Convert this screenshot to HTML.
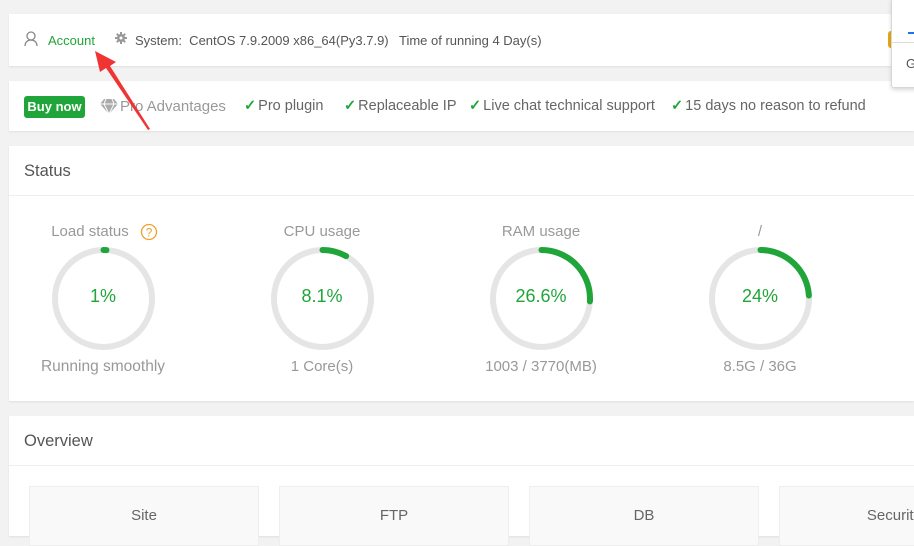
<!DOCTYPE html>
<html><head><meta charset="utf-8"><style>
*{margin:0;padding:0;box-sizing:border-box}
body{width:914px;height:522px;overflow:hidden;background:#f2f2f2;font-family:"Liberation Sans",sans-serif;position:relative;color:#666}
.card{position:absolute;left:9px;right:0;background:#fff;box-shadow:0 1px 2px rgba(0,0,0,.08)}
.t{position:absolute;white-space:nowrap}
.g{color:#20a53a}
.ck{color:#20a53a;font-weight:bold;margin-right:2px}
.lbl{position:absolute;width:200px;text-align:center;font-size:15px;color:#999}
.pc{font-size:18px;color:#20a53a}
.box{position:absolute;top:486px;width:230px;height:60px;background:#f9f9f9;border:1px solid #eee;text-align:center;padding-top:20px;font-size:15px;color:#666}
</style></head><body>
<div class="card" style="top:14px;height:52px">
  <svg class="t" style="left:15px;top:17px" width="14" height="15" viewBox="0 0 14 15" fill="none" stroke="#888" stroke-width="1.3"><circle cx="7" cy="5" r="4"/><path d="M1 15c0-4 3-6 6-6s6 2 6 6"/></svg>
  <span class="t g" style="left:39px;top:19px;font-size:13px">Account</span>
  <svg class="t" style="left:106px;top:18px" width="12" height="12" viewBox="0 0 12 12"><circle cx="6" cy="6" r="4" fill="#999"/><g stroke="#999" stroke-width="2"><path d="M6 0v12M0 6h12M1.8 1.8l8.4 8.4M10.2 1.8l-8.4 8.4"/></g><circle cx="6" cy="6" r="1.5" fill="#fff"/></svg>
  <span class="t" style="left:126px;top:19px;font-size:13px;color:#555">System:&nbsp;&nbsp;CentOS 7.9.2009 x86_64(Py3.7.9)</span>
  <span class="t" style="left:390px;top:19px;font-size:13px;color:#555">Time of running 4 Day(s)</span>
  <div class="t" style="left:879px;top:17px;width:4px;height:17px;background:#e6a817;border-radius:3px 0 0 3px"></div>
</div>
<div class="card" style="top:81px;height:50px">
  <div class="t" style="left:15px;top:15px;width:61px;height:22px;background:#20a53a;border-radius:3px;color:#fff;font-size:13px;font-weight:bold;text-align:center;line-height:22px">Buy now</div>
  <svg class="t" style="left:91px;top:18px" width="18" height="15" viewBox="0 0 18 15"><path d="M4 0h10l4 5-9 10L0 5z" fill="#aaa"/><path d="M0 5h18M6 0l-2 5 5 10 5-10-2-5" stroke="#fff" stroke-width="1" fill="none"/></svg>
  <span class="t" style="left:111px;top:17px;font-size:15px;color:#999">Pro Advantages</span>
  <span class="t" style="left:235px;top:17px;font-size:14.5px;color:#666"><span class="ck">✓</span>Pro plugin</span>
  <span class="t" style="left:335px;top:17px;font-size:14.5px;color:#666"><span class="ck">✓</span>Replaceable IP</span>
  <span class="t" style="left:460px;top:17px;font-size:14.5px;color:#666"><span class="ck">✓</span>Live chat technical support</span>
  <span class="t" style="left:662px;top:17px;font-size:14.5px;color:#666"><span class="ck">✓</span>15 days no reason to refund</span>
</div>
<div class="card" style="top:146px;height:255px">
  <span class="t" style="left:15px;top:16px;font-size:16.5px;color:#555">Status</span>
  <div style="position:absolute;left:0;right:0;top:49px;border-top:1px solid #eee"></div>
</div>
<svg style="position:absolute;left:0;top:0" width="914" height="522">
  <g fill="none" stroke-width="6">
    <circle cx="103.5" cy="298.5" r="48.5" stroke="#e5e5e5"/>
    <circle cx="322.5" cy="298.5" r="48.5" stroke="#e5e5e5"/>
    <circle cx="541.5" cy="298.5" r="48.5" stroke="#e5e5e5"/>
    <circle cx="760.5" cy="298.5" r="48.5" stroke="#e5e5e5"/>
    <g stroke="#20a53a" stroke-linecap="round">
      <circle cx="103.5" cy="298.5" r="48.5" stroke-dasharray="3 400" transform="rotate(-90 103.5 298.5)"/>
      <circle cx="322.5" cy="298.5" r="48.5" stroke-dasharray="24.7 400" transform="rotate(-90 322.5 298.5)"/>
      <circle cx="541.5" cy="298.5" r="48.5" stroke-dasharray="79 400" transform="rotate(-90 541.5 298.5)"/>
      <circle cx="760.5" cy="298.5" r="48.5" stroke-dasharray="73 400" transform="rotate(-90 760.5 298.5)"/>
    </g>
  </g>
</svg>
<div class="lbl" style="left:-10px;top:223px;width:200px">Load status</div>
<svg class="t" style="left:140px;top:223px" width="18" height="18" viewBox="0 0 18 18"><circle cx="9" cy="9" r="7.5" fill="none" stroke="#f0a030" stroke-width="1.3"/><text x="9" y="13.5" text-anchor="middle" font-size="12" fill="#f0a030" font-family="Liberation Sans">?</text></svg>
<div class="lbl" style="left:222px;top:223px">CPU usage</div>
<div class="lbl" style="left:441px;top:223px">RAM usage</div>
<div class="lbl" style="left:660px;top:223px">/</div>
<div class="lbl pc" style="left:3px;top:286px">1%</div>
<div class="lbl pc" style="left:222px;top:286px">8.1%</div>
<div class="lbl pc" style="left:441px;top:286px">26.6%</div>
<div class="lbl pc" style="left:660px;top:286px">24%</div>
<div class="lbl" style="left:3px;top:358px;font-size:15.5px">Running smoothly</div>
<div class="lbl" style="left:222px;top:358px">1 Core(s)</div>
<div class="lbl" style="left:441px;top:358px">1003 / 3770(MB)</div>
<div class="lbl" style="left:660px;top:358px">8.5G / 36G</div>
<div class="card" style="top:416px;height:120px">
  <span class="t" style="left:15px;top:16px;font-size:16.5px;color:#555">Overview</span>
  <div style="position:absolute;left:0;right:0;top:49px;border-top:1px solid #eee"></div>
</div>
<div class="box" style="left:29px">Site</div>
<div class="box" style="left:279px">FTP</div>
<div class="box" style="left:529px">DB</div>
<div class="box" style="left:779px">Security</div>
<svg style="position:absolute;left:0;top:0" width="914" height="522">
  <path d="M95 51 L100 72 L106 68 L148 130 L150 129 L110 66 L116 62 Z" fill="#f03434"/>
</svg>
<div style="position:absolute;left:891px;top:-2px;width:30px;height:90px;background:#fff;border:1px solid #d8d8d8;border-radius:3px;box-shadow:0 2px 4px rgba(0,0,0,.15)">
  <div style="position:absolute;left:16px;top:33px;width:14px;height:2px;background:#1a73e8"></div>
  <div style="position:absolute;left:0;right:0;top:43px;border-top:1px solid #ddd"></div>
  <span style="position:absolute;left:14px;top:57px;font-size:13px;color:#555">G</span>
</div>
</body></html>
